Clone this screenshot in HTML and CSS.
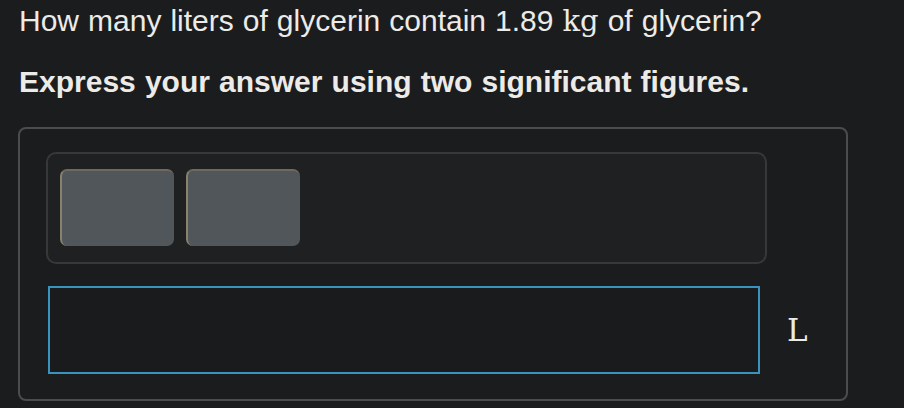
FILE: index.html
```html
<!DOCTYPE html>
<html lang="en">
  <head>
    <meta charset="utf-8">
    <title>Glycerin Question</title>
    <link rel="stylesheet" href="styles.css">
  </head>

  <body>
    <p class="question">How many liters of glycerin contain 1.89 <span class="math">kg</span> of glycerin?</p>
    <p class="hint">Express your answer using two significant figures.</p>

    <div class="answer-box">
      <div class="toolbar">
        <button class="tool-btn"></button>
        <button class="tool-btn"></button>
      </div>
      <div class="answer-row">
        <div class="answer-input"></div>
        <span class="unit">L</span>
      </div>
    </div>
  </body>
</html>
```

FILE: styles.css
```css
body {
  margin: 0;
  padding: 0 18px;
  background: #1b1c1e;
  color: #ecebe8;
  font-family: "Liberation Sans", Arial, sans-serif;
}

.question {
  margin: 0;
  padding: 3px 0 0 1px;
  font-size: 30px;
  line-height: 36px;
  word-spacing: 0.7px;
}

.math {
  font-family: "DejaVu Serif", "Liberation Serif", serif;
  font-size: 29px;
}

.hint {
  margin: 25px 0 0 1px;
  font-size: 30px;
  font-weight: bold;
  line-height: 36px;
  word-spacing: 0.8px;
}

.answer-box {
  margin-top: 27px;
  width: 830px;
  height: 274px;
  box-sizing: border-box;
  border: 2px solid #4a4d50;
  border-radius: 8px;
  padding: 23px 0 0 26px;
}

.toolbar {
  width: 721px;
  height: 112px;
  box-sizing: border-box;
  border: 2px solid #36393c;
  border-radius: 10px;
  background: #1f2022;
  display: flex;
  gap: 12px;
  padding: 15px 0 0 12px;
}

.tool-btn {
  width: 114px;
  height: 77px;
  border: none;
  border-left: 2px solid #8a806f;
  border-top: 2px solid #6f6a60;
  border-radius: 7px;
  background: #51565a;
}

.answer-row {
  margin-top: 22px;
  display: flex;
  align-items: center;
}

.answer-input {
  margin-left: 2px;
  width: 712px;
  height: 88px;
  box-sizing: border-box;
  border: 2px solid #3a93bf;
  background: #1a1b1d;
}

.unit {
  margin-left: 27px;
  font-family: "DejaVu Serif", "Liberation Serif", serif;
  font-size: 31px;
  color: #ecebe8;
}
```
